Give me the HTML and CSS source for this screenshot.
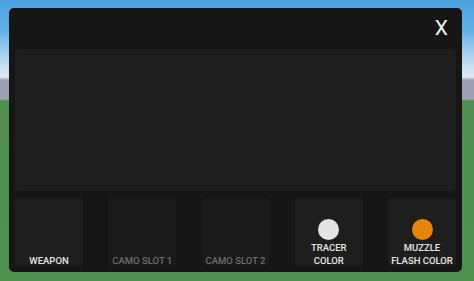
FILE: index.html
```html
<!DOCTYPE html>
<html>
<head>
<meta charset="utf-8">
<link rel="stylesheet" href="styles.css">
</head>
<body>
<div class="scene">
  <div class="panel">
    <div class="header">
      <span class="close">X</span>
    </div>
    <div class="display"></div>
    <div class="slots">
      <div class="slot active"><span class="label">WEAPON</span></div>
      <div class="slot dim"><span class="label">CAMO SLOT 1</span></div>
      <div class="slot dim"><span class="label">CAMO SLOT 2</span></div>
      <div class="slot active"><span class="dot white"></span><span class="label">TRACER<br>COLOR</span></div>
      <div class="slot active"><span class="dot orange"></span><span class="label">MUZZLE<br>FLASH COLOR</span></div>
    </div>
  </div>
</div>
</body>
</html>
```
FILE: styles.css
```css
html, body {
  margin: 0;
  padding: 0;
}
body {
  width: 474px;
  height: 281px;
  overflow: hidden;
  background: linear-gradient(to bottom,
    #4aa3e0 0px,
    #62b1e6 30px,
    #a8d2ee 55px,
    #e2e9f1 77px,
    #9aa0b2 80px,
    #9aa0b2 99px,
    #4f8e50 101px,
    #4f9150 281px);
  font-family: "Roboto", "Liberation Sans", sans-serif;
}
.scene {
  padding: 8px 12px 9px 9px;
}
.panel {
  width: 453px;
  height: 264px;
  box-sizing: border-box;
  background: #161616;
  border-radius: 5px;
  padding: 0 6px 6px 6px;
  display: flex;
  flex-direction: column;
}
.header {
  height: 41px;
  display: flex;
  justify-content: flex-end;
  align-items: center;
}
.close {
  color: #f2f2f2;
  font-size: 21px;
  font-weight: 400;
  margin-right: 8px;
  margin-top: -1px;
  line-height: 1;
}
.display {
  height: 142px;
  background: #1e1e1e;
  border-radius: 4px;
}
.slots {
  margin-top: 7px;
  height: 68px;
  display: flex;
  justify-content: space-between;
}
.slot {
  width: 68px;
  height: 68px;
  border-radius: 4px;
  display: flex;
  flex-direction: column;
  align-items: center;
  justify-content: flex-end;
  box-sizing: border-box;
}
.slot.active {
  background: #1e1e1e;
}
.slot.dim {
  background: #1a1a1a;
}
.label {
  font-size: 9.5px;
  font-weight: 500;
  line-height: 13px;
  text-align: center;
  color: #e6e6e6;
  white-space: nowrap;
  margin-bottom: -1px;
}
.slot.dim .label {
  color: #6e6e6e;
}
.dot {
  width: 21px;
  height: 21px;
  border-radius: 50%;
  margin-bottom: 1px;
}
.dot.white {
  background: #e4e4e4;
}
.dot.orange {
  background: #e6830b;
}
```
